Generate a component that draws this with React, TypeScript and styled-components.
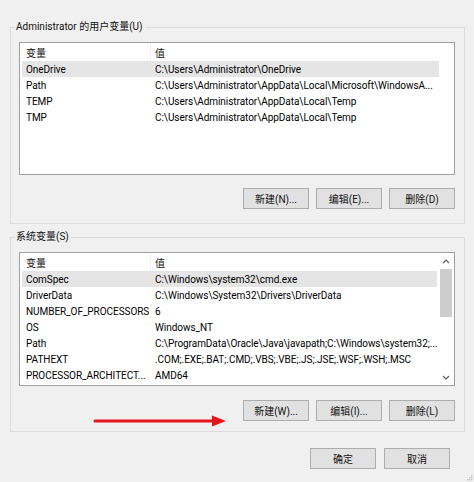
import React from 'react';
import styled, { createGlobalStyle } from 'styled-components';

interface EnvVar {
  name: string;
  value: string;
}

const userVars: EnvVar[] = [
  { name: 'OneDrive', value: 'C:\\Users\\Administrator\\OneDrive' },
  { name: 'Path', value: 'C:\\Users\\Administrator\\AppData\\Local\\Microsoft\\WindowsA...' },
  { name: 'TEMP', value: 'C:\\Users\\Administrator\\AppData\\Local\\Temp' },
  { name: 'TMP', value: 'C:\\Users\\Administrator\\AppData\\Local\\Temp' },
];

const systemVars: EnvVar[] = [
  { name: 'ComSpec', value: 'C:\\Windows\\system32\\cmd.exe' },
  { name: 'DriverData', value: 'C:\\Windows\\System32\\Drivers\\DriverData' },
  { name: 'NUMBER_OF_PROCESSORS', value: '6' },
  { name: 'OS', value: 'Windows_NT' },
  { name: 'Path', value: 'C:\\ProgramData\\Oracle\\Java\\javapath;C:\\Windows\\system32;...' },
  { name: 'PATHEXT', value: '.COM;.EXE;.BAT;.CMD;.VBS;.VBE;.JS;.JSE;.WSF;.WSH;.MSC' },
  { name: 'PROCESSOR_ARCHITECT...', value: 'AMD64' },
];

const FONT = `Roboto, "Noto Sans CJK SC", sans-serif`;

const GlobalStyle = createGlobalStyle`
  html, body {
    margin: 0;
    padding: 0;
    background: #f0f0f0;
  }
  * {
    box-sizing: border-box;
  }
`;

const Window = styled.div`
  position: relative;
  width: 474px;
  height: 482px;
  background: #f0f0f0;
  padding: 19px 0 0 10px;
  font-family: ${FONT};
  font-size: 10px;
  color: #000;
  display: flex;
  flex-direction: column;
  overflow: hidden;
`;

const Group = styled.fieldset<{ $bottom: number; $gapTop?: number }>`
  margin: ${(p) => p.$gapTop ?? 0}px 0 0 0;
  width: 455px;
  border: 1px solid #dcdcdc;
  padding: 7px 9px ${(p) => p.$bottom}px 8px;
  min-width: 0;
`;

const Legend = styled.legend`
  margin-left: -4px;
  padding: 0 2px 0 1px;
  line-height: 16px;
  font-size: 10px;
  color: #111;
`;

const ListBox = styled.div<{ $height: number }>`
  height: ${(p) => p.$height}px;
  border: 1px solid #a0a0a0;
  background: #fff;
  display: flex;
  overflow: hidden;
`;

const ListBody = styled.div`
  flex: 1;
  padding-left: 2px;
  min-width: 0;
`;

const HeaderRow = styled.div`
  display: grid;
  grid-template-columns: 129px 1fr;
  height: 18px;
  align-items: center;
  width: 417px;
`;

const HeaderCell = styled.div<{ $divider?: boolean }>`
  padding-left: 4px;
  height: 100%;
  display: flex;
  align-items: center;
  color: #111;
  border-right: ${(p) => (p.$divider ? '1px solid #efefef' : 'none')};
`;

const Row = styled.div<{ $selected?: boolean }>`
  display: grid;
  grid-template-columns: 129px 1fr;
  height: 16px;
  align-items: center;
  width: 417px;
  background: ${(p) => (p.$selected ? '#e5e5e5' : 'transparent')};
  white-space: nowrap;
`;

const Cell = styled.div`
  padding-left: 4px;
  overflow: hidden;
  color: #000;
  letter-spacing: -0.05px;
`;

const ScrollBar = styled.div`
  width: 17px;
  display: flex;
  flex-direction: column;
  align-items: center;
  background: #fff;
`;

const ScrollArrow = styled.div`
  height: 16px;
  width: 100%;
  display: flex;
  align-items: center;
  justify-content: center;
`;

const ScrollTrack = styled.div`
  flex: 1;
  width: 100%;
  display: flex;
  justify-content: center;
  padding-left: 1px;
`;

const ScrollThumb = styled.div`
  width: 12px;
  height: 48px;
  background: #cdcdcd;
`;

const ButtonRow = styled.div<{ $top: number }>`
  display: flex;
  justify-content: flex-end;
  gap: 7px;
  margin-top: ${(p) => p.$top}px;
`;

const Button = styled.button`
  width: 66px;
  height: 21px;
  padding: 0;
  background: #e1e1e1;
  border: 1px solid #adadad;
  font-family: ${FONT};
  font-size: 10px;
  color: #111;
  display: flex;
  align-items: center;
  justify-content: center;
`;

const DialogButtons = styled.div`
  display: flex;
  justify-content: flex-end;
  gap: 8px;
  margin: 16px 24px 0 0;
`;

const Arrow = styled.svg`
  position: absolute;
  left: 92px;
  top: 413px;
`;

const Grip = styled.svg`
  position: absolute;
  right: 1px;
  bottom: 1px;
`;

const Chevron: React.FC<{ down?: boolean }> = ({ down }) => (
  <svg width="8" height="5" viewBox="0 0 8 5">
    <path
      d={down ? 'M1 1 L4 4 L7 1' : 'M1 4 L4 1 L7 4'}
      fill="none"
      stroke="#606060"
      strokeWidth="1.2"
    />
  </svg>
);

const VarList: React.FC<{ vars: EnvVar[]; height: number; scroll?: boolean }> = ({
  vars,
  height,
  scroll,
}) => (
  <ListBox $height={height}>
    <ListBody>
      <HeaderRow>
        <HeaderCell $divider>变量</HeaderCell>
        <HeaderCell>值</HeaderCell>
      </HeaderRow>
      {vars.map((v, i) => (
        <Row key={v.name + i} $selected={i === 0}>
          <Cell>{v.name}</Cell>
          <Cell>{v.value}</Cell>
        </Row>
      ))}
    </ListBody>
    {scroll && (
      <ScrollBar>
        <ScrollArrow>
          <Chevron />
        </ScrollArrow>
        <ScrollTrack>
          <ScrollThumb />
        </ScrollTrack>
        <ScrollArrow>
          <Chevron down />
        </ScrollArrow>
      </ScrollBar>
    )}
  </ListBox>
);

export default function App() {
  return (
    <>
      <GlobalStyle />
      <Window>
        <Group $bottom={14}>
          <Legend>Administrator 的用户变量(U)</Legend>
          <VarList vars={userVars} height={133} />
          <ButtonRow $top={13}>
            <Button>新建(N)...</Button>
            <Button>编辑(E)...</Button>
            <Button>删除(D)</Button>
          </ButtonRow>
        </Group>

        <Group $bottom={10} $gapTop={5}>
          <Legend>系统变量(S)</Legend>
          <VarList vars={systemVars} height={134} scroll />
          <ButtonRow $top={14}>
            <Button>新建(W)...</Button>
            <Button>编辑(I)...</Button>
            <Button>删除(L)</Button>
          </ButtonRow>
        </Group>

        <DialogButtons>
          <Button>确定</Button>
          <Button>取消</Button>
        </DialogButtons>

        <Arrow width="136" height="16" viewBox="0 0 136 16">
          <line x1="3" y1="8" x2="122" y2="8" stroke="#e3161c" strokeWidth="3" strokeLinecap="round" />
          <path d="M120 2.5 L134 8 L120 13.5 Z" fill="#e3161c" />
        </Arrow>

        <Grip width="8" height="8" viewBox="0 0 8 8">
          <rect x="6" y="2" width="1.5" height="1.5" fill="#c8c8c8" />
          <rect x="4" y="4" width="1.5" height="1.5" fill="#c8c8c8" />
          <rect x="6" y="4" width="1.5" height="1.5" fill="#c8c8c8" />
          <rect x="2" y="6" width="1.5" height="1.5" fill="#c8c8c8" />
          <rect x="4" y="6" width="1.5" height="1.5" fill="#c8c8c8" />
          <rect x="6" y="6" width="1.5" height="1.5" fill="#c8c8c8" />
        </Grip>
      </Window>
    </>
  );
}
